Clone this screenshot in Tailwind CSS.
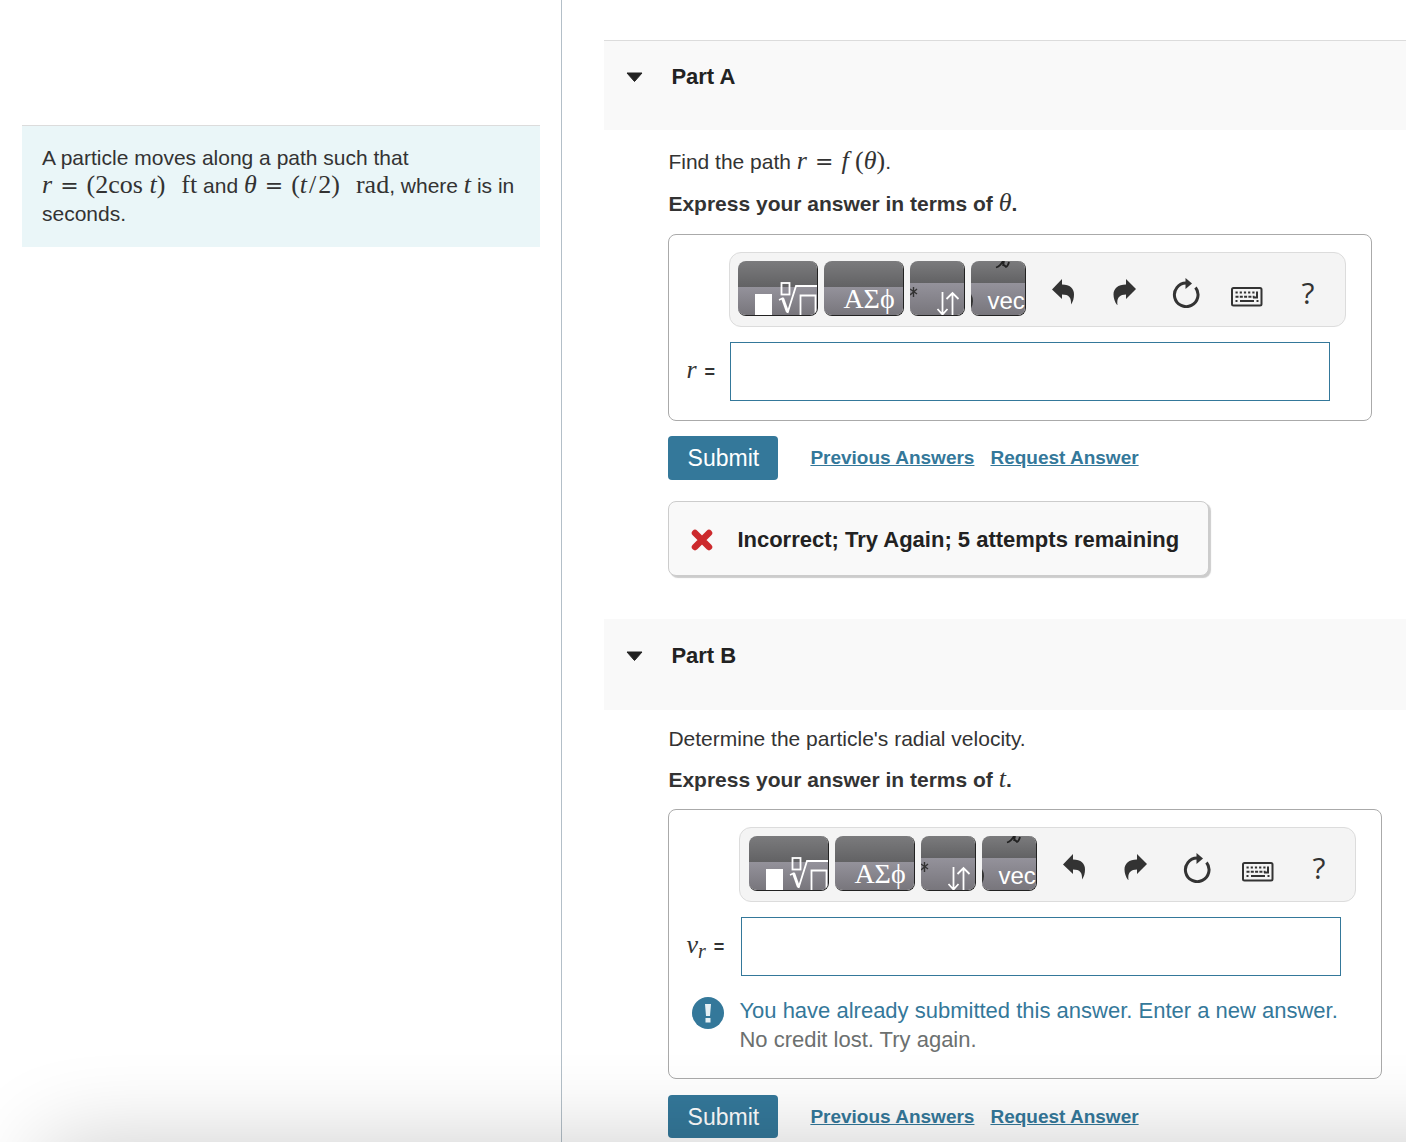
<!DOCTYPE html>
<html lang="en">
<head>
<meta charset="utf-8">
<meta name="viewport" content="width=device-width, initial-scale=1">
<title>Particle path problem</title>
<script src="https://cdn.jsdelivr.net/npm/@tailwindcss/browser@4"></script>
</head>
<body class="bg-white font-['Liberation_Sans',Arial,sans-serif] text-[21px] leading-7 text-[#333]">

<!-- Shared icons -->
<svg class="absolute size-0" aria-hidden="true">
  <defs>
    <linearGradient id="top" x1="0" y1="0" x2="0" y2="1"><stop offset="0" stop-color="#7b7b7d"/><stop offset="1" stop-color="#626264"/></linearGradient>
    <linearGradient id="low" x1="0" y1="0" x2="0" y2="1"><stop offset="0" stop-color="#94929b"/><stop offset="1" stop-color="#77757b"/></linearGradient>
  </defs>
  <symbol id="template" viewBox="0 0 80 55">
    <rect width="80" height="26" fill="url(#top)"/><rect y="26" width="80" height="29" fill="url(#low)"/>
    <rect x="17" y="33" width="17" height="22" fill="#fff"/>
    <g fill="none" stroke="#fff"><rect x="43.500" y="22" width="8" height="11.500" stroke-width="1.800"/>
    <path d="M41 39l4-2" stroke-width="1.500"/><path d="M44.500 37l5 14" stroke-width="3"/><path d="M49.500 52l8.500-27h22" stroke-width="1.800"/>
    <path d="M62.500 55V34.500H77.500v21" stroke-width="1.800"/></g>
  </symbol>
  <symbol id="greek" viewBox="0 0 80 55">
    <rect width="80" height="26" fill="url(#top)"/><rect y="26" width="80" height="29" fill="url(#low)"/>
  </symbol>
  <symbol id="arrows" viewBox="0 0 54 55">
    <rect width="54" height="22" fill="url(#top)"/><rect y="22" width="54" height="33" fill="url(#low)"/>
    <path d="M3.500 26v10M0 28l7 5M0 34l7-6" stroke="#333" stroke-width="1.400" fill="none"/>
    <g stroke="#fff" stroke-width="1.800" fill="none"><path d="M32.500 31v22M27.500 48l5 5.500 5-5.500M42.500 55V32M36.500 38l6-6 6 6"/></g>
  </symbol>
  <symbol id="vec" viewBox="0 0 54 55">
    <rect width="54" height="22" fill="url(#top)"/><rect y="22" width="54" height="33" fill="url(#low)"/>
    <path d="M25 6.500q4-1 7-6.500M33 0l-1 5M38 1q-1 4-3 5l-2-2" stroke="#222" stroke-width="1.800" fill="none"/>
    <path d="M0 33q4 7 0 14z" fill="#333"/>
  </symbol>
  <symbol id="undo" viewBox="0 0 24 26">
    <path d="M0 10.500L10 0v5.500c8 0 12 4 12 10 0 4-1 7-3 10 .5-7-2-10-9-10V20z" fill="#333"/>
  </symbol>
  <symbol id="redo" viewBox="0 0 24 26">
    <path d="M23 10L13 0v5.500c-8 0-12.500 4-12.500 10 0 4 1.500 8 4 11-1-7 1.500-11 8.500-11v4.500z" fill="#333"/>
  </symbol>
  <symbol id="reset" viewBox="0 0 28 30">
    <path d="M14 5A11.800 11.800 0 1 0 23.500 9.500" fill="none" stroke="#333" stroke-width="3"/>
    <path d="M13.500 0L20 5.500 13.500 11z" fill="#333"/>
  </symbol>
  <symbol id="keys" viewBox="0 0 32 20">
    <rect x="1" y="1" width="29.500" height="17.500" rx="1.500" fill="none" stroke="#333" stroke-width="2"/>
    <path d="M4.500 5.500h19" stroke="#333" stroke-width="2" stroke-dasharray="2.200 2"/>
    <path d="M4.500 9.800h19" stroke="#333" stroke-width="2" stroke-dasharray="3 1.300"/>
    <path d="M26 4.500v6h-4M4.500 14h2M9 14h14M25.500 14h2" stroke="#333" stroke-width="2" fill="none"/>
  </symbol>
</svg>

<div class="flex min-h-screen">
  <aside class="w-[40%] shrink-0 border-r border-[#b3bfc8] pl-[22px] pr-[21px] pt-[125px]">
    <div class="min-h-[122px] border-t border-[#dcdcdc] bg-[#eaf6f8] py-[18px] pl-5 pr-2">
      <p>A particle moves along a path such that<br>
      <span class="whitespace-nowrap"><span class="font-['Liberation_Serif',serif] text-[26px] leading-4"><i>r</i><span class="mx-2 font-['DejaVu_Serif',serif] text-[22px] leading-4">=</span>(2cos <i>t</i>)<span class="ml-4">ft</span></span> and <span class="font-['Liberation_Serif',serif] text-[26px] leading-4"><i>θ</i><span class="mx-2 font-['DejaVu_Serif',serif] text-[22px] leading-4">=</span>(<i>t</i><span class="mx-0.5">/</span>2)<span class="ml-4">rad</span></span>, where <i class="font-['Liberation_Serif',serif] text-[26px] leading-4">t</i> is in</span><br>
      seconds.</p>
    </div>
  </aside>

  <main class="min-w-0 grow pl-[42px] pt-10">
    <section>
      <h2 class="h-[90px] border-t border-[#dcdcdc] bg-[#f9f9f9] text-[22px]/7 font-bold text-[#222]">
        <button type="button" class="flex items-center pl-[22px] pt-[22px]" aria-expanded="true">
          <svg class="mr-7 h-[11px] w-[17px]" viewBox="0 0 17 11" aria-hidden="true"><path d="M1 1h15L8.500 9.500z" fill="#222" stroke="#222" stroke-linejoin="round"/></svg>Part A</button>
      </h2>
      <div class="pl-16 pt-[18px]">
        <p>Find the path <span class="font-['Liberation_Serif',serif] text-[26px] leading-4"><i>r</i><span class="mx-2 font-['DejaVu_Serif',serif] text-[22px] leading-4">=</span><i>f</i> (<i>θ</i>)</span>.</p>
        <p class="mt-3.5 font-bold">Express your answer in terms of <i class="font-['Liberation_Serif',serif] text-[26px] leading-4 font-normal">θ</i>.</p>
        <div class="mt-4 flex w-fit rounded-lg border border-[#aaa] pb-[19px] pl-[17px] pr-[25px] pt-[17px]">
          <label for="ans-a" class="mt-[106px] w-[43px] text-[18px]/7 font-bold"><i class="mr-2 font-['Liberation_Serif',serif] text-[26px] leading-4 font-normal">r</i>=</label>
          <div>
            <div class="flex h-[75px] w-[617px] items-center gap-1.5 rounded-xl border border-[#dcdcdc] bg-[#f4f4f4] pb-0.5 pl-2" role="toolbar">
              <button type="button" aria-label="Templates" class="h-[55px] w-20 shrink-0 overflow-hidden rounded-lg border-b border-r border-[#222]"><svg class="h-[55px] w-20"><use href="#template"/></svg></button>
              <button type="button" class="relative h-[55px] w-20 shrink-0 overflow-hidden rounded-lg border-b border-r border-[#222]"><svg class="h-[55px] w-20" aria-hidden="true"><use href="#greek"/></svg><span class="absolute left-[19px] top-6 font-['Liberation_Serif',serif] text-[28px]/7 text-white">ΑΣϕ</span></button>
              <button type="button" aria-label="Arrows" class="h-[55px] w-[55px] shrink-0 overflow-hidden rounded-lg border-b border-r border-[#222]"><svg class="h-[55px] w-[54px]"><use href="#arrows"/></svg></button>
              <button type="button" class="relative h-[55px] w-[55px] shrink-0 overflow-hidden rounded-lg border-b border-r border-[#222]"><svg class="h-[55px] w-[54px]" aria-hidden="true"><use href="#vec"/></svg><span class="absolute left-4 top-[26px] text-[24px]/7 text-white">vec</span></button>
              <div class="ml-px flex h-[55px] items-center">
                <button type="button" aria-label="Undo" class="flex w-[61px] justify-center pt-1.5"><svg class="h-[26px] w-6"><use href="#undo"/></svg></button>
                <button type="button" aria-label="Redo" class="flex w-[61px] justify-center pt-1.5"><svg class="h-[26px] w-6"><use href="#redo"/></svg></button>
                <button type="button" aria-label="Reset" class="flex w-[61px] justify-center pt-2"><svg class="h-[30px] w-7"><use href="#reset"/></svg></button>
                <button type="button" aria-label="Keyboard shortcuts" class="flex w-[61px] justify-center pt-4"><svg class="h-5 w-8"><use href="#keys"/></svg></button>
                <button type="button" aria-label="Help" class="w-[61px] pt-2 font-['Open_Sans',sans-serif] text-[30px]/7">?</button>
              </div>
            </div>
            <input id="ans-a" type="text" class="ml-px mt-[15px] block h-[59px] w-[600px] border border-[#34789a] px-3">
          </div>
        </div>
        <div class="mt-[15px] flex items-center">
          <button type="submit" class="h-11 w-[110px] rounded-sm bg-[#34789a] text-[23px]/7 text-white">Submit</button>
          <a href="#" class="ml-8 text-[19px]/7 font-bold text-[#34789a] underline">Previous Answers</a>
          <a href="#" class="ml-4 text-[19px]/7 font-bold text-[#34789a] underline">Request Answer</a>
        </div>
        <div class="mt-[21px] flex h-[75px] w-fit items-center rounded-lg border border-[#ccc] bg-[#f9f9f9] pl-[22px] pr-[29px] pt-0.5 text-[22px]/7 font-bold text-[#222] shadow-[2px_2px_1px_#ccc]" role="status">
          <svg class="mr-6 h-[22px] w-[22px]" viewBox="0 0 22 22" aria-hidden="true"><path d="M4 4l14 14M18 4L4 18" stroke="#cc2a2d" stroke-width="6.500" stroke-linecap="round"/></svg>
          Incorrect; Try Again; 5 attempts remaining
        </div>
      </div>
    </section>

    <section class="mt-[43px]">
      <h2 class="h-[91px] bg-[#f9f9f9] text-[22px]/7 font-bold text-[#222]">
        <button type="button" class="flex items-center pl-[22px] pt-[23px]" aria-expanded="true">
          <svg class="mr-7 h-[11px] w-[17px]" viewBox="0 0 17 11" aria-hidden="true"><path d="M1 1h15L8.500 9.500z" fill="#222" stroke="#222" stroke-linejoin="round"/></svg>Part B</button>
      </h2>
      <div class="pl-16 pt-[15px]">
        <p>Determine the particle's radial velocity.</p>
        <p class="mt-[13px] font-bold">Express your answer in terms of <i class="font-['Liberation_Serif',serif] text-[26px] leading-4 font-normal">t</i>.</p>
        <div class="mt-[15px] w-fit rounded-lg border border-[#aaa] pb-6 pl-[17px] pr-[25px] pt-[17px]">
          <div class="flex">
            <label for="ans-b" class="mt-[106px] w-[53px] whitespace-nowrap text-[18px]/7 font-bold"><i class="mr-2 font-['Liberation_Serif',serif] text-[26px] leading-4 font-normal">v<sub class="text-[20px]">r</sub></i>=</label>
            <div>
              <div class="flex h-[75px] w-[617px] items-center gap-1.5 rounded-xl border border-[#dcdcdc] bg-[#f4f4f4] pb-0.5 pl-[9px]" role="toolbar">
                <button type="button" aria-label="Templates" class="h-[55px] w-20 shrink-0 overflow-hidden rounded-lg border-b border-r border-[#222]"><svg class="h-[55px] w-20"><use href="#template"/></svg></button>
                <button type="button" class="relative h-[55px] w-20 shrink-0 overflow-hidden rounded-lg border-b border-r border-[#222]"><svg class="h-[55px] w-20" aria-hidden="true"><use href="#greek"/></svg><span class="absolute left-[19px] top-6 font-['Liberation_Serif',serif] text-[28px]/7 text-white">ΑΣϕ</span></button>
                <button type="button" aria-label="Arrows" class="h-[55px] w-[55px] shrink-0 overflow-hidden rounded-lg border-b border-r border-[#222]"><svg class="h-[55px] w-[54px]"><use href="#arrows"/></svg></button>
                <button type="button" class="relative h-[55px] w-[55px] shrink-0 overflow-hidden rounded-lg border-b border-r border-[#222]"><svg class="h-[55px] w-[54px]" aria-hidden="true"><use href="#vec"/></svg><span class="absolute left-4 top-[26px] text-[24px]/7 text-white">vec</span></button>
                <div class="ml-px flex h-[55px] items-center">
                  <button type="button" aria-label="Undo" class="flex w-[61px] justify-center pt-1.5"><svg class="h-[26px] w-6"><use href="#undo"/></svg></button>
                  <button type="button" aria-label="Redo" class="flex w-[61px] justify-center pt-1.5"><svg class="h-[26px] w-6"><use href="#redo"/></svg></button>
                  <button type="button" aria-label="Reset" class="flex w-[61px] justify-center pt-2"><svg class="h-[30px] w-7"><use href="#reset"/></svg></button>
                  <button type="button" aria-label="Keyboard shortcuts" class="flex w-[61px] justify-center pt-4"><svg class="h-5 w-8"><use href="#keys"/></svg></button>
                  <button type="button" aria-label="Help" class="w-[61px] pt-2 font-['Open_Sans',sans-serif] text-[30px]/7">?</button>
                </div>
              </div>
              <input id="ans-b" type="text" class="ml-0.5 mt-[15px] block h-[59px] w-[600px] border border-[#34789a] px-3">
            </div>
          </div>
          <div class="mt-5 flex pl-1.5 text-[22px]/[29px]" role="status">
            <svg class="mr-[15px] mt-px h-8 w-8 shrink-0" viewBox="0 0 32 32" aria-hidden="true"><circle cx="16" cy="16" r="16" fill="#34789a"/><path d="M13 7h6l-1 12h-4zM13.500 21h5v4.500h-5z" fill="#e6f0f4"/></svg>
            <p class="text-[#6c706f]"><span class="text-[#34789a]">You have already submitted this answer. Enter a new answer.</span><br>No credit lost. Try again.</p>
          </div>
        </div>
        <div class="mt-4 flex items-center">
          <button type="submit" class="h-[43px] w-[110px] rounded-sm bg-[#34789a] text-[23px]/7 text-white">Submit</button>
          <a href="#" class="ml-8 text-[19px]/7 font-bold text-[#34789a] underline">Previous Answers</a>
          <a href="#" class="ml-4 text-[19px]/7 font-bold text-[#34789a] underline">Request Answer</a>
        </div>
      </div>
    </section>
  </main>
</div>

<!-- Soft shade along the bottom edge of the window -->
<div class="pointer-events-none fixed inset-x-0 bottom-0 h-32 overflow-hidden">
  <div class="absolute -right-32 left-11 top-full h-40 shadow-[0_0_90px_rgba(0,0,0,0.2)]"></div>
</div>
</body>
</html>
